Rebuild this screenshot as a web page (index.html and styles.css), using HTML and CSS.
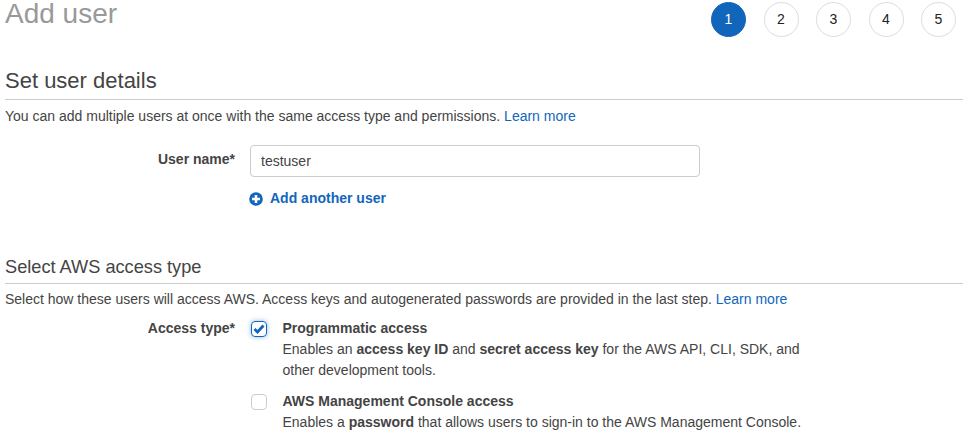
FILE: index.html
```html
<!DOCTYPE html>
<html lang="en">
<head>
  <meta charset="UTF-8" />
  <title>Add user</title>
  <link rel="stylesheet" href="styles.css">
</head>
<body>
  <div class="header">
    <h1>Add user</h1>
    <div class="steps">
      <span class="step active">1</span>
      <span class="step">2</span>
      <span class="step">3</span>
      <span class="step">4</span>
      <span class="step">5</span>
    </div>
  </div>

  <h2 class="section-title first">Set user details</h2>
  <p class="section-desc">You can add multiple users at once with the same access type and permissions. <a href="#">Learn more</a></p>

  <div class="form-row name-row">
    <label class="form-label">User name*</label>
    <div class="form-field">
      <input type="text" value="testuser">
      <a class="add-link" href="#">
        <svg width="14" height="14" viewBox="0 0 14 14"><circle cx="7" cy="7" r="6.8" fill="#1166bb"/><path d="M7 3v8M3 7h8" stroke="#fff" stroke-width="2.6"/></svg>
        Add another user
      </a>
    </div>
  </div>

  <h2 class="section-title second">Select AWS access type</h2>
  <p class="section-desc tight">Select how these users will access AWS. Access keys and autogenerated passwords are provided in the last step. <a href="#">Learn more</a></p>

  <div class="form-row access-row">
    <label class="form-label">Access type*</label>
    <div class="options">
      <div class="option">
        <span class="check checked">
          <svg width="12" height="10" viewBox="0 0 12 10"><path d="M1.5 5l3 3 6-6.5" fill="none" stroke="#1166bb" stroke-width="2.8"/></svg>
        </span>
        <div class="option-text">
          <div class="option-title">Programmatic access</div>
          <div>Enables an <b>access key ID</b> and <b>secret access key</b> for the AWS API, CLI, SDK, and other development tools.</div>
        </div>
      </div>
      <div class="option">
        <span class="check"></span>
        <div class="option-text">
          <div class="option-title">AWS Management Console access</div>
          <div>Enables a <b>password</b> that allows users to sign-in to the AWS Management Console.</div>
        </div>
      </div>
    </div>
  </div>
</body>
</html>
```

FILE: styles.css
```css
html, body {
  height: 431px;
  overflow: hidden;
}
body {
  font-family: "Liberation Sans", Arial, sans-serif;
  font-size: 14px;
  line-height: 21px;
  color: #444;
  background: #fff;
  margin: 0;
  padding: 0 0 0 5px;
}
a {
  color: #1166bb;
  text-decoration: none;
}
.header {
  display: flex;
  justify-content: space-between;
  align-items: flex-start;
  height: 66px;
}
h1 {
  font-size: 28px;
  font-weight: 400;
  line-height: 28px;
  color: #999;
  margin: 0;
}
.steps {
  display: flex;
  gap: 17.5px;
  margin-top: 2px;
  margin-right: 7px;
}
.step {
  box-sizing: border-box;
  width: 35px;
  height: 35px;
  border: 1px solid #ddd;
  border-radius: 50%;
  display: flex;
  align-items: center;
  justify-content: center;
  color: #222;
  font-size: 14px;
}
.step.active {
  background: #1166bb;
  border-color: #1166bb;
  color: #fff;
}
.section-title {
  font-weight: 400;
  color: #444;
  margin: 0;
  border-bottom: 1px solid #ccc;
}
.first {
  font-size: 22px;
  line-height: 30px;
  padding-bottom: 3px;
}
.second {
  font-size: 18.2px;
  line-height: 24px;
  margin-top: 46px;
  padding-bottom: 4px;
}
.section-desc {
  margin: 6px 0 0;
}
.section-desc.tight {
  margin-top: 5px;
}
.form-row {
  display: flex;
}
.form-label {
  width: 230px;
  box-sizing: border-box;
  text-align: right;
  font-weight: 700;
  flex-shrink: 0;
}
.name-row {
  margin-top: 18px;
}
.name-row .form-label {
  padding-top: 4px;
}
.form-field {
  margin-left: 15px;
}
input {
  display: block;
  box-sizing: border-box;
  width: 450px;
  height: 32px;
  padding: 0 10px;
  border: 1px solid #ccc;
  border-radius: 4px;
  font: 14px "Liberation Sans", Arial, sans-serif;
  color: #444;
}
.add-link {
  display: flex;
  align-items: center;
  gap: 7px;
  margin-top: 11px;
  margin-left: -1px;
  font-weight: 700;
}
.access-row {
  margin-top: 8px;
}
.options {
  margin-left: 16px;
  display: flex;
  flex-direction: column;
  gap: 10px;
}
.option {
  display: flex;
  gap: 15.5px;
}
.check {
  box-sizing: border-box;
  width: 16px;
  height: 16px;
  margin-top: 3px;
  border: 1px solid #ccc;
  border-radius: 4px;
  display: flex;
  align-items: center;
  justify-content: center;
  flex-shrink: 0;
}
.check.checked {
  border-color: #1166bb;
  box-shadow: 0 0 5px rgba(17, 102, 187, 0.45);
}
.option-text {
  width: 530px;
}
.option-title {
  font-weight: 700;
}
```
